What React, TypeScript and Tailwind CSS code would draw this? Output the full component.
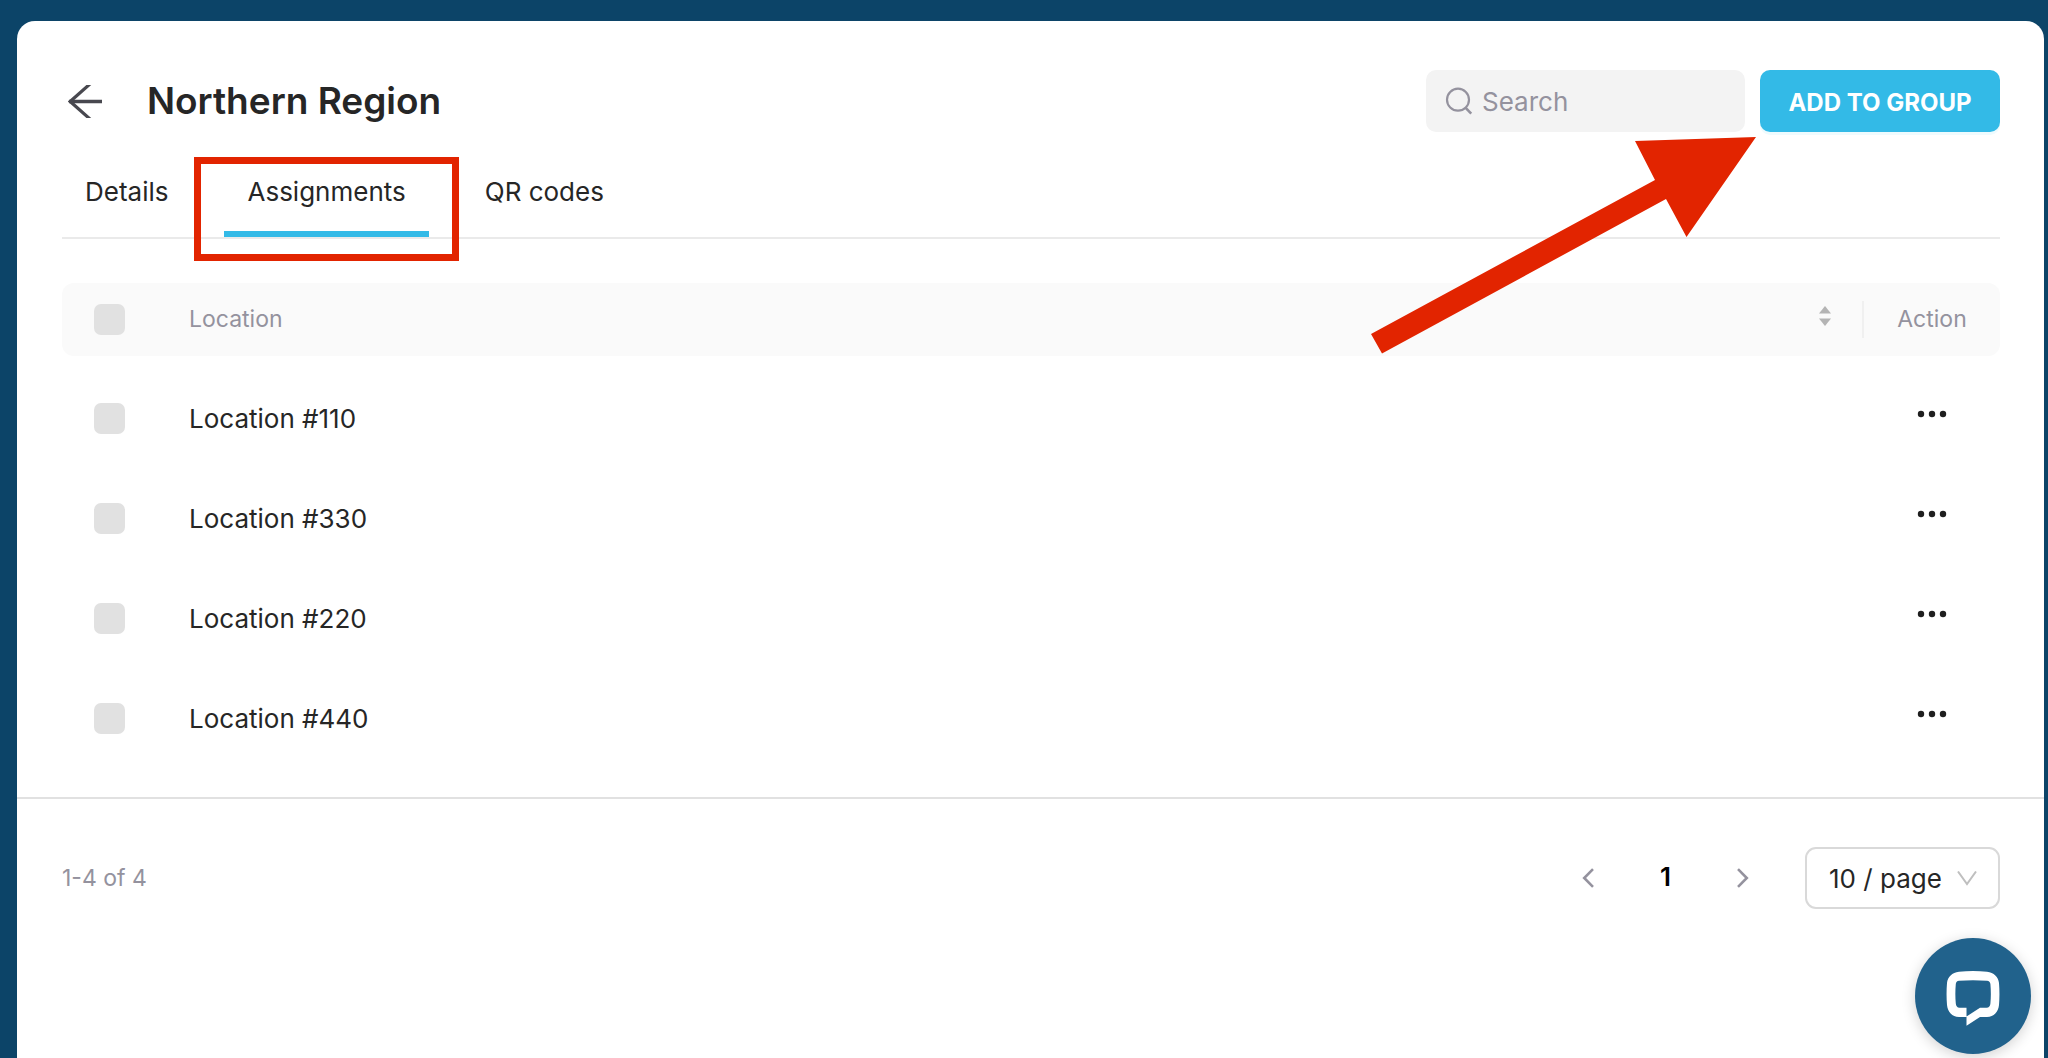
import { useState } from "react";
import clsx from "clsx";

const tabs = ["Details", "Assignments", "QR codes"];

const locations = [
  "Location #110",
  "Location #330",
  "Location #220",
  "Location #440",
];

interface CheckboxProps {
  label: string;
}

const Checkbox = ({ label }: CheckboxProps) => (
  <input
    type="checkbox"
    aria-label={label}
    className="block size-[31px] appearance-none rounded-[7px] bg-[#e1e1e1] checked:bg-[#33bae7]"
  />
);

const BackIcon = () => (
  <svg width="34" height="33" viewBox="0 0 34 33" fill="none" stroke="#48484f">
    <path d="M1 16.5H34" strokeWidth="3.4" />
    <path d="M22.5 -1.5L2.2 16.5L22.5 34.5" strokeWidth="3.2" />
  </svg>
);

const SearchIcon = () => (
  <svg
    width="28"
    height="28"
    viewBox="0 0 28 28"
    fill="none"
    stroke="#94929e"
    strokeWidth="2.2"
    className="shrink-0"
  >
    <circle cx="13" cy="12.7" r="11" />
    <path d="M20.2 20.4L26.2 26.6" strokeWidth="2.6" />
  </svg>
);

const SortIcon = () => (
  <svg width="12" height="20" viewBox="0 0 12 20" fill="#b4b4b4">
    <path d="M6 0L12 7.5H0Z" />
    <path d="M6 20L12 12.5H0Z" />
  </svg>
);

const DotsIcon = () => (
  <svg width="30" height="8" viewBox="0 0 30 8" fill="#1f1f1f">
    <circle cx="4" cy="4" r="3.2" />
    <circle cx="15" cy="4" r="3.2" />
    <circle cx="26" cy="4" r="3.2" />
  </svg>
);

const ChevronIcon = ({ flip }: { flip?: boolean }) => (
  <svg
    width="12"
    height="20"
    viewBox="0 0 12 20"
    fill="none"
    stroke="#94929e"
    strokeWidth="2.6"
    className={clsx(flip && "rotate-180")}
  >
    <path d="M11 1.2L2.2 10L11 18.8" />
  </svg>
);

const ChatIcon = () => (
  <svg width="54" height="55" viewBox="0 0 54 55">
    <path
      fill="#fff"
      fillRule="evenodd"
      d="M13 .7C22 -.2 32 -.2 41 .7C48 1.4 52.3 6 53 12C53.6 19 53.6 27 53 34C52.3 41 48 45.7 41 46H34L20.500 54.700V46H13C6 45.7 1.7 41 1 34C.4 27 .4 19 1 12C1.7 6 6 1.4 13 .7ZM13 9.7C11 9.9 10 10.8 9.8 13C9.2 20 9.2 26 9.8 32.5C10 35 11.3 36.7 13.5 36.7H20.500V45.5L34 36.7H40.5C43 36.7 44.2 35 44.4 32.5C45 26 45 20 44.4 13C44.2 10.8 43 9.9 41 9.7C32 9 22 9 13 9.7Z"
    />
  </svg>
);

const Header = () => (
  <header className="relative flex items-center">
    <button type="button" aria-label="Back" className="ml-[6px] mr-[45px]">
      <BackIcon />
    </button>
    <h1 className="text-[37px] leading-[62px] font-semibold text-[#262626]">
      Northern Region
    </h1>
    <label className="ml-auto flex h-[62px] w-[319px] items-center gap-[9px] rounded-[10px] bg-[#f3f3f3] pl-[19px] pr-4">
      <SearchIcon />
      <input
        type="text"
        placeholder="Search"
        aria-label="Search"
        className="w-full bg-transparent text-[26px] text-[#262626] outline-none placeholder:text-[#94929e]"
      />
    </label>
    <button
      type="button"
      className="ml-[15px] h-[62px] w-[240px] rounded-[10px] bg-[#33bae7] pt-[3px] text-[24px] font-bold text-white shadow-[0_3px_0_#effbfe]"
    >
      ADD TO GROUP
    </button>

    {/* pointer to the add button */}
    <svg
      width="386"
      height="218"
      viewBox="0 0 386 218"
      fill="#e22400"
      className="pointer-events-none absolute right-[243px] top-[66px]"
    >
      <path d="M385 1L264 5L284 44L0 198L11 217.500L295 63L315.500 101Z" />
    </svg>
  </header>
);

const Tabs = () => {
  const [active, setActive] = useState("Assignments");

  return (
    <nav className="mt-[13px] flex gap-[33px] border-b-2 border-[#eaeaea]">
      {tabs.map((tab) => (
        <div key={tab} className="relative">
          <button
            type="button"
            onClick={() => setActive(tab)}
            className={clsx(
              "h-[92px] border-y-[6px] border-t-transparent px-[23px] text-[26px] text-[#262626]",
              active === tab ? "border-b-[#33bae7]" : "border-b-transparent"
            )}
          >
            {tab}
          </button>
          {tab === "Assignments" && (
            <div className="pointer-events-none absolute -inset-x-[30px] top-[12px] h-[104px] border-[7px] border-[#e22400]" />
          )}
        </div>
      ))}
    </nav>
  );
};

const LocationTable = () => (
  <table className="mt-[44px] w-full border-separate border-spacing-0 text-[26px] text-[#262626]">
    <thead className="text-[23px] text-[#94929e]">
      <tr className="h-[73px]">
        <th className="w-[95px] rounded-l-[12px] bg-[#fafafa] p-0 pl-[32px]">
          <Checkbox label="Select all" />
        </th>
        <th className="bg-[#fafafa] p-0 pl-[32px] font-normal">
          <div className="flex h-[37px] items-center justify-between border-r-2 border-[#f0f0f0] pr-[31px]">
            Location
            <button type="button" aria-label="Sort by location" className="pb-2">
              <SortIcon />
            </button>
          </div>
        </th>
        <th className="w-[136px] rounded-r-[12px] bg-[#fafafa] p-0 text-center font-normal">
          Action
        </th>
      </tr>
    </thead>
    <tbody>
      <tr aria-hidden="true">
        <td colSpan={3} className="h-[12px] p-0" />
      </tr>
      {locations.map((location) => (
        <tr key={location} className="h-[100px]">
          <td className="p-0 pl-[32px]">
            <Checkbox label={location} />
          </td>
          <td className="p-0 pl-[32px]">{location}</td>
          <td className="p-0">
            <button
              type="button"
              aria-label={`Actions for ${location}`}
              className="mx-auto block pb-2"
            >
              <DotsIcon />
            </button>
          </td>
        </tr>
      ))}
    </tbody>
  </table>
);

const Pagination = () => (
  <footer className="mt-[29px] flex items-center border-t-2 border-[#e1e1e1] pl-[45px] pr-[44px] pt-[48px]">
    <p className="text-[23px] text-[#94929e]">1-4 of 4</p>
    <div className="ml-auto flex items-center gap-[66px]">
      <button type="button" aria-label="Previous page">
        <ChevronIcon />
      </button>
      <button type="button" className="pb-1 text-[26px] font-semibold text-black">
        1
      </button>
      <button type="button" aria-label="Next page">
        <ChevronIcon flip />
      </button>
    </div>
    <div className="relative ml-[56px]">
      <select
        aria-label="Page size"
        className="h-[62px] w-[195px] appearance-none rounded-[11px] border-2 border-[#d9d9d9] bg-white pl-[22px] text-[26px] text-[#262626]"
      >
        <option>10 / page</option>
        <option>20 / page</option>
        <option>50 / page</option>
      </select>
      <svg
        width="20"
        height="15"
        viewBox="0 0 20 15"
        fill="none"
        stroke="#bfbfbf"
        strokeWidth="2"
        className="pointer-events-none absolute right-[23px] top-[24px]"
      >
        <path d="M1 .5L10 13L19 .5" />
      </svg>
    </div>
  </footer>
);

export default function App() {
  return (
    <div className="flex min-h-screen bg-[#0c4468] pl-[17px] pr-1 pt-[21px] font-['Inter',sans-serif]">
      <main className="flex-1 rounded-t-[18px] bg-white pt-[49px]">
        <div className="pl-[45px] pr-[44px]">
          <Header />
          <Tabs />
          <LocationTable />
        </div>
        <Pagination />
      </main>
      <button
        type="button"
        aria-label="Open chat"
        className="fixed bottom-1 right-[17px] flex size-[116px] items-center justify-center rounded-full bg-[#21628c] pt-[4px] shadow-[0_3px_14px_rgba(0,0,0,0.18)]"
      >
        <ChatIcon />
      </button>
    </div>
  );
}
